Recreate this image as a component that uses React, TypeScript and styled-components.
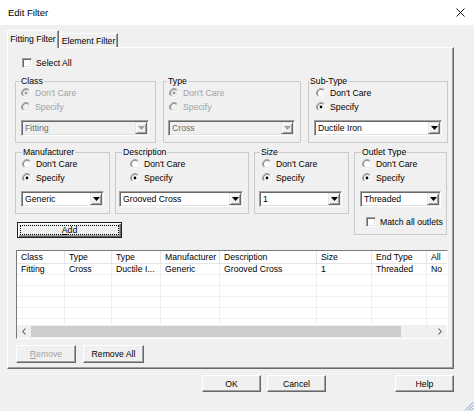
import React from "react";
import styled, { createGlobalStyle, css } from "styled-components";

const FONT = `"Liberation Sans", Arial, sans-serif`;

const GlobalStyle = createGlobalStyle`
  html, body { margin: 0; padding: 0; background: #f0f0f0; }
  body { font-family: ${FONT}; }
  * { box-sizing: border-box; }
`;

const Window = styled.div`
  position: relative;
  width: 474px;
  height: 411px;
  background: #f0f0f0;
  font-family: ${FONT};
  font-size: 8.7px;
  color: #000;
  overflow: hidden;
  display: flex;
  flex-direction: column;
`;

const TitleBar = styled.div`
  height: 25px;
  flex: none;
  background: #fff;
  display: flex;
  align-items: center;
  justify-content: space-between;
  padding: 0 9px 0 8px;
`;

const Title = styled.span`
  font-size: 9.5px;
  line-height: 1;
`;

const CloseIcon = styled.svg`
  width: 9px;
  height: 9px;
  display: block;
`;

const Body = styled.div`
  padding: 5px 0 0 7px;
  display: flex;
  flex-direction: column;
`;

const TabStrip = styled.div`
  height: 17px;
  display: flex;
  align-items: flex-end;
`;

const Tab = styled.div<{ $active?: boolean; $w: number }>`
  position: relative;
  z-index: 1;
  width: ${(p) => p.$w}px;
  height: ${(p) => (p.$active ? 18 : 14)}px;
  margin-bottom: ${(p) => (p.$active ? -1 : 0)}px;
  display: flex;
  align-items: center;
  justify-content: center;
  white-space: nowrap;
  background: #f0f0f0;
  border-top: 1px solid #fff;
  border-left: 1px solid #fff;
  border-right: 1px solid #696969;
  box-shadow: inset -1px 0 #a0a0a0;
  padding-bottom: ${(p) => (p.$active ? 1 : 0)}px;
`;

const TabPanel = styled.div`
  width: 447px;
  border: 1px solid;
  border-color: #fff #696969 #696969 #fff;
  box-shadow: inset -1px -1px #a0a0a0;
  padding: 0 0 5px 7px;
  display: flex;
  flex-direction: column;
  align-items: flex-start;
`;

const CheckRow = styled.div<{ $mt?: number; $ml?: number }>`
  display: flex;
  align-items: center;
  gap: 4px;
  height: 13px;
  white-space: nowrap;
  margin-top: ${(p) => p.$mt ?? 0}px;
  margin-left: ${(p) => p.$ml ?? 0}px;
`;

const CheckBox = styled.span`
  flex: none;
  width: 10px;
  height: 10px;
  background: #fff;
  border: 1px solid;
  border-color: #a0a0a0 #fff #fff #a0a0a0;
  box-shadow: inset 1px 1px #696969, inset -1px -1px #e3e3e3;
`;

const GroupRow = styled.div<{ $mt: number; $gap: number }>`
  display: flex;
  align-items: flex-start;
  gap: ${(p) => p.$gap}px;
  margin-top: ${(p) => p.$mt}px;
`;

const Column = styled.div`
  display: flex;
  flex-direction: column;
  align-items: flex-start;
`;

const Group = styled.fieldset<{ $w: number }>`
  width: ${(p) => p.$w}px;
  min-width: 0;
  margin: 0;
  padding: 0 4px 6px 4px;
  border: 1px solid #cacaca;
  display: flex;
  flex-direction: column;
`;

const Legend = styled.legend<{ $off: number }>`
  padding: 0 1px;
  margin-left: ${(p) => p.$off}px;
  height: 10px;
  line-height: 10px;
  white-space: nowrap;
`;

const RadioRow = styled.div<{ $indent: number; $disabled?: boolean }>`
  display: flex;
  align-items: center;
  gap: 4px;
  height: 14px;
  padding-left: ${(p) => p.$indent}px;
  white-space: nowrap;
  color: ${(p) => (p.$disabled ? "#a3a3a3" : "#000")};
`;

const RadioSvg = styled.svg`
  flex: none;
  width: 10px;
  height: 10px;
  display: block;
`;

const Combo = styled.div<{ $disabled?: boolean; $ml?: number; $mr?: number }>`
  height: 16px;
  margin: 6px ${(p) => p.$mr ?? 1}px 0 ${(p) => p.$ml ?? 1}px;
  display: flex;
  align-items: stretch;
  padding: 1px;
  background: ${(p) => (p.$disabled ? "#f0f0f0" : "#fff")};
  border: 1px solid;
  border-color: #a0a0a0 #fff #fff #a0a0a0;
  box-shadow: inset 1px 1px #696969, inset -1px -1px #e3e3e3;
`;

const ComboText = styled.span<{ $disabled?: boolean }>`
  flex: 1;
  min-width: 0;
  display: flex;
  align-items: center;
  padding-left: 2px;
  white-space: nowrap;
  overflow: hidden;
  color: ${(p) => (p.$disabled ? "#6d6d6d" : "#000")};
`;

const DropButton = styled.span`
  flex: none;
  width: 12px;
  display: flex;
  align-items: center;
  justify-content: center;
  background: #f0f0f0;
  border: 1px solid;
  border-color: #e3e3e3 #696969 #696969 #e3e3e3;
  box-shadow: inset 1px 1px #fff, inset -1px -1px #a0a0a0;
`;

const Button = styled.button<{ $w: number; $h: number; $default?: boolean; $ml?: number; $mt?: number }>`
  width: ${(p) => p.$w}px;
  height: ${(p) => p.$h}px;
  margin: ${(p) => p.$mt ?? 0}px 0 0 ${(p) => p.$ml ?? 0}px;
  padding: 0;
  font-family: ${FONT};
  font-size: 8.7px;
  color: #000;
  background: #f0f0f0;
  border: 1px solid;
  border-color: #fff #696969 #696969 #fff;
  box-shadow: inset -1px -1px #a0a0a0;
  white-space: nowrap;
  &:disabled {
    color: #a3a3a3;
  }
  ${(p) =>
    p.$default &&
    css`
      border: 1px solid #202020;
      box-shadow: inset 1px 1px #fff, inset -1px -1px #696969, inset -2px -2px #a0a0a0;
      outline: 1px dotted #000;
      outline-offset: -4px;
    `}
`;

const ListView = styled.div`
  width: 432px;
  height: 89px;
  margin: 12px 0 0 1px;
  border: 1px solid;
  border-color: #7a7a7a #fff #fff #7a7a7a;
  background: #fff;
  display: flex;
  flex-direction: column;
  overflow: hidden;
`;

const COLS = "48px 47px 49px 59px 97px 55px 55px 30px";

const HeaderRow = styled.div`
  flex: none;
  display: grid;
  grid-template-columns: ${COLS};
  height: 13px;
`;

const HeaderCell = styled.div`
  display: flex;
  align-items: center;
  padding-left: 4px;
  white-space: nowrap;
  overflow: hidden;
  border-right: 1px solid #e5e5e5;
  border-bottom: 1px solid #e5e5e5;
`;

const Rows = styled.div`
  flex: 1;
  overflow: hidden;
`;

const DataRow = styled.div`
  display: grid;
  grid-template-columns: ${COLS};
  height: 11px;
`;

const DataCell = styled.div`
  display: flex;
  align-items: center;
  padding-left: 4px;
  white-space: nowrap;
  overflow: hidden;
  border-right: 1px solid #f0f0f0;
  border-bottom: 1px solid #f0f0f0;
`;

const HScroll = styled.div`
  flex: none;
  height: 13px;
  display: flex;
  background: #f0f0f0;
`;

const ScrollArrow = styled.div`
  width: 14px;
  flex: none;
  display: flex;
  align-items: center;
  justify-content: center;
`;

const ScrollTrack = styled.div`
  flex: 1;
  padding: 1px 0;
  display: flex;
`;

const Thumb = styled.div<{ $w: number }>`
  width: ${(p) => p.$w}px;
  background: #cdcdcd;
`;

const ButtonRow = styled.div<{ $mt: number; $ml: number; $gap: number }>`
  display: flex;
  gap: ${(p) => p.$gap}px;
  margin-top: ${(p) => p.$mt}px;
  margin-left: ${(p) => p.$ml}px;
`;

const Footer = styled.div`
  width: 447px;
  padding-top: 6px;
  display: flex;
  justify-content: flex-end;
  gap: 6px;
`;

const SizeGrip = styled.svg`
  position: absolute;
  right: 0;
  bottom: 0;
  width: 10px;
  height: 10px;
`;

function Radio({ checked, disabled }: { checked?: boolean; disabled?: boolean }) {
  return (
    <RadioSvg viewBox="0 0 12 12">
      <circle cx="6" cy="6" r="4.2" fill={disabled ? "#f0f0f0" : "#fff"} />
      <path d="M9.89 2.11 A5.5 5.5 0 0 0 2.11 9.89" fill="none" stroke="#a0a0a0" />
      <path d="M2.11 9.89 A5.5 5.5 0 0 0 9.89 2.11" fill="none" stroke="#fff" />
      <path d="M9.18 2.82 A4.5 4.5 0 0 0 2.82 9.18" fill="none" stroke="#696969" />
      <path d="M2.82 9.18 A4.5 4.5 0 0 0 9.18 2.82" fill="none" stroke="#e3e3e3" />
      {checked && <circle cx="6" cy="6" r="1.7" fill={disabled ? "#a0a0a0" : "#000"} />}
    </RadioSvg>
  );
}

function Arrow({ disabled }: { disabled?: boolean }) {
  return (
    <svg width="7" height="4" viewBox="0 0 7 4" style={{ display: "block" }}>
      <path d="M0 0 H7 L3.5 4 Z" fill={disabled ? "#a0a0a0" : "#000"} />
    </svg>
  );
}

function ComboBox({ value, disabled, ml, mr }: { value: string; disabled?: boolean; ml?: number; mr?: number }) {
  return (
    <Combo $disabled={disabled} $ml={ml} $mr={mr}>
      <ComboText $disabled={disabled}>{value}</ComboText>
      <DropButton>
        <Arrow disabled={disabled} />
      </DropButton>
    </Combo>
  );
}

type GroupDef = {
  label: string;
  w: number;
  off: number;
  indent: number;
  disabled?: boolean;
  specify: boolean;
  value: string;
  ml?: number;
  mr?: number;
};

function FilterGroup({ g, children }: { g: GroupDef; children?: React.ReactNode }) {
  return (
    <Group $w={g.w}>
      <Legend $off={g.off}>{g.label}</Legend>
      <RadioRow $indent={g.indent} $disabled={g.disabled}>
        <Radio checked={!g.specify} disabled={g.disabled} />
        Don't Care
      </RadioRow>
      <RadioRow $indent={g.indent} $disabled={g.disabled}>
        <Radio checked={g.specify} disabled={g.disabled} />
        Specify
      </RadioRow>
      <ComboBox value={g.value} disabled={g.disabled} ml={g.ml} mr={g.mr} />
      {children}
    </Group>
  );
}

const row1: GroupDef[] = [
  { label: "Class", w: 141, off: 0, indent: 1, disabled: true, specify: false, value: "Fitting", mr: 2 },
  { label: "Type", w: 138, off: -1, indent: 1, disabled: true, specify: false, value: "Cross", ml: 0 },
  { label: "Sub-Type", w: 140, off: -4, indent: 3, specify: true, value: "Ductile Iron" },
];

const row2: GroupDef[] = [
  { label: "Manufacturer", w: 95, off: 2, indent: 2, specify: true, value: "Generic" },
  { label: "Description", w: 134, off: 2, indent: 10, specify: true, value: "Grooved Cross", ml: -1 },
  { label: "Size", w: 95, off: 1, indent: 3, specify: true, value: "1", ml: 0, mr: 2 },
];

const outlet: GroupDef = { label: "Outlet Type", w: 93, off: 2, indent: 3, specify: true, value: "Threaded" };

const headers = ["Class", "Type", "Type", "Manufacturer", "Description", "Size", "End Type", "All"];
const data = ["Fitting", "Cross", "Ductile I...", "Generic", "Grooved Cross", "1", "Threaded", "No"];

export default function App() {
  return (
    <>
      <GlobalStyle />
      <Window>
        <TitleBar>
          <Title>Edit Filter</Title>
          <CloseIcon viewBox="0 0 9 9">
            <path d="M0.5 0.5 L8.5 8.5 M8.5 0.5 L0.5 8.5" stroke="#000" strokeWidth="0.9" />
          </CloseIcon>
        </TitleBar>
        <Body>
          <TabStrip>
            <Tab $active $w={52}>Fitting Filter</Tab>
            <Tab $w={59}>Element Filter</Tab>
          </TabStrip>
          <TabPanel>
            <CheckRow $mt={8} $ml={7}>
              <CheckBox />
              Select All
            </CheckRow>
            <GroupRow $mt={7} $gap={7}>
              {row1.map((g) => (
                <FilterGroup key={g.label} g={g} />
              ))}
            </GroupRow>
            <GroupRow $mt={4} $gap={5}>
              <Column>
                <GroupRow $mt={0} $gap={5}>
                  {row2.map((g) => (
                    <FilterGroup key={g.label} g={g} />
                  ))}
                </GroupRow>
                <Button $default $w={105} $h={16} $mt={8} $ml={2}>
                  <u>A</u>dd
                </Button>
              </Column>
              <FilterGroup g={outlet}>
                <CheckRow $mt={8} $ml={7}>
                  <CheckBox />
                  Match all outlets
                </CheckRow>
              </FilterGroup>
            </GroupRow>
            <ListView>
              <HeaderRow>
                {headers.map((h, i) => (
                  <HeaderCell key={i}>{h}</HeaderCell>
                ))}
              </HeaderRow>
              <Rows>
                <DataRow>
                  {data.map((d, i) => (
                    <DataCell key={i}>{d}</DataCell>
                  ))}
                </DataRow>
                {[0, 1, 2, 3, 4].map((r) => (
                  <DataRow key={r}>
                    {headers.map((_, i) => (
                      <DataCell key={i} />
                    ))}
                  </DataRow>
                ))}
              </Rows>
              <HScroll>
                <ScrollArrow>
                  <svg width="4" height="7" viewBox="0 0 4 7">
                    <path d="M3.5 0.5 L0.8 3.5 L3.5 6.5" fill="none" stroke="#606060" strokeWidth="1.1" />
                  </svg>
                </ScrollArrow>
                <ScrollTrack>
                  <Thumb $w={370} />
                </ScrollTrack>
                <ScrollArrow>
                  <svg width="4" height="7" viewBox="0 0 4 7">
                    <path d="M0.5 0.5 L3.2 3.5 L0.5 6.5" fill="none" stroke="#606060" strokeWidth="1.1" />
                  </svg>
                </ScrollArrow>
              </HScroll>
            </ListView>
            <ButtonRow $mt={6} $ml={1} $gap={7}>
              <Button $w={60} $h={18} disabled>
                <u>R</u>emove
              </Button>
              <Button $w={61} $h={18}>Remove All</Button>
            </ButtonRow>
          </TabPanel>
          <Footer>
            <Button $w={59} $h={17}>OK</Button>
            <Button $w={59} $h={17}>Cancel</Button>
            <Button $w={59} $h={17} $ml={63}>Help</Button>
          </Footer>
        </Body>
        <SizeGrip viewBox="0 0 10 10">
          <path d="M9.5 1 L1 9.5 M9.5 4 L4 9.5 M9.5 7 L7 9.5" stroke="#7f9cc4" strokeWidth="1" />
        </SizeGrip>
      </Window>
    </>
  );
}
